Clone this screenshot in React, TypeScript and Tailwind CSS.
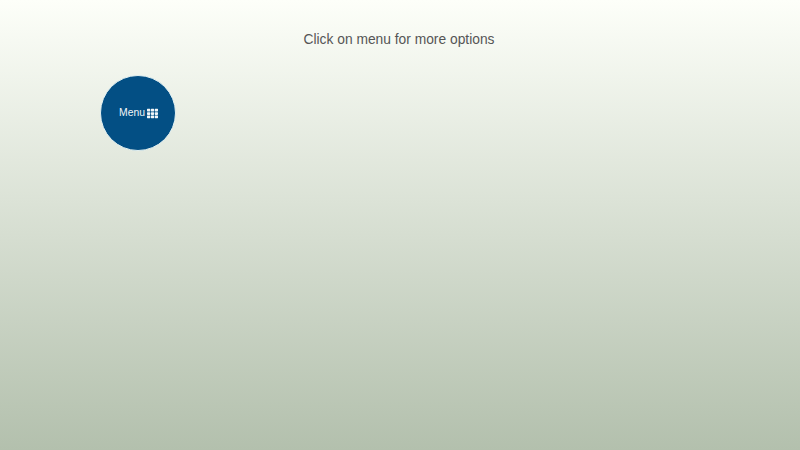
import { FaTh } from 'react-icons/fa';

export default function App() {
  return (
    <div className="flex h-[450px] w-full flex-col bg-gradient-to-b from-[#fdfff9] to-[#b3c0ad] font-['Liberation_Sans',sans-serif]">
      <p className="mt-[31px] pr-[2px] text-center text-[13.8px] leading-[18px] text-[#555555]">
        Click on menu for more options
      </p>
      <div className="mt-[26px] ml-[100px]">
        <button
          type="button"
          className="flex size-[76px] items-center justify-center gap-[2px] rounded-full border border-[#e3f1f2] bg-[#034f84] pl-[1px] text-[10.4px] text-[#f2f6f8]"
        >
          Menu
          <FaTh className="size-[11px]" />
        </button>
      </div>
    </div>
  );
}
